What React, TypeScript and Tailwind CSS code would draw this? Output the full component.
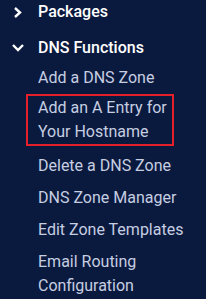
import type * as React from 'react'

const ITEMS: Array<{ label: string; highlight?: boolean }> = [
  { label: 'Add a DNS Zone' },
  { label: 'Add an A Entry for Your Hostname', highlight: true },
  { label: 'Delete a DNS Zone' },
  { label: 'DNS Zone Manager' },
  { label: 'Edit Zone Templates' },
  { label: 'Email Routing Configuration' }
]

function ChevronRight(): React.JSX.Element {
  return (
    <svg width="14" height="14" viewBox="0 0 14 14" fill="none">
      <path d="M3 3 L8 7.5 L3 12" stroke="white" strokeWidth="2.4" />
    </svg>
  )
}

function ChevronDown(): React.JSX.Element {
  return (
    <svg width="14" height="14" viewBox="0 0 14 14" fill="none">
      <path d="M1 4 L6 9 L11 4" stroke="white" strokeWidth="2.4" />
    </svg>
  )
}

export default function App(): React.JSX.Element {
  return (
    <div
      className="h-[299px] w-[206px] overflow-hidden bg-[#0a1a3e]"
      style={{ fontFamily: 'Roboto, "Liberation Sans", sans-serif' }}
    >
      <div className="flex h-6 items-center pl-3 text-[16px] font-medium leading-6 text-white">
        <span className="flex w-[26px] items-center">
          <ChevronRight />
        </span>
        Packages
      </div>

      <div className="mt-3 flex h-6 items-center pl-3 text-[16px] font-medium leading-6 text-white">
        <span className="flex w-[26px] items-center">
          <ChevronDown />
        </span>
        DNS Functions
      </div>

      <ul className="mt-0.5 pl-[38px] text-[16px] leading-6 text-[#c6cee2]">
        {ITEMS.map((item) =>
          item.highlight ? (
            <li
              key={item.label}
              className="mb-1 ml-[-12px] w-[148px] border-2 border-[#e3202a] pl-[10px] pr-1"
            >
              {item.label}
            </li>
          ) : (
            <li key={item.label} className="w-[160px] py-1">
              {item.label}
            </li>
          )
        )}
      </ul>
    </div>
  )
}
